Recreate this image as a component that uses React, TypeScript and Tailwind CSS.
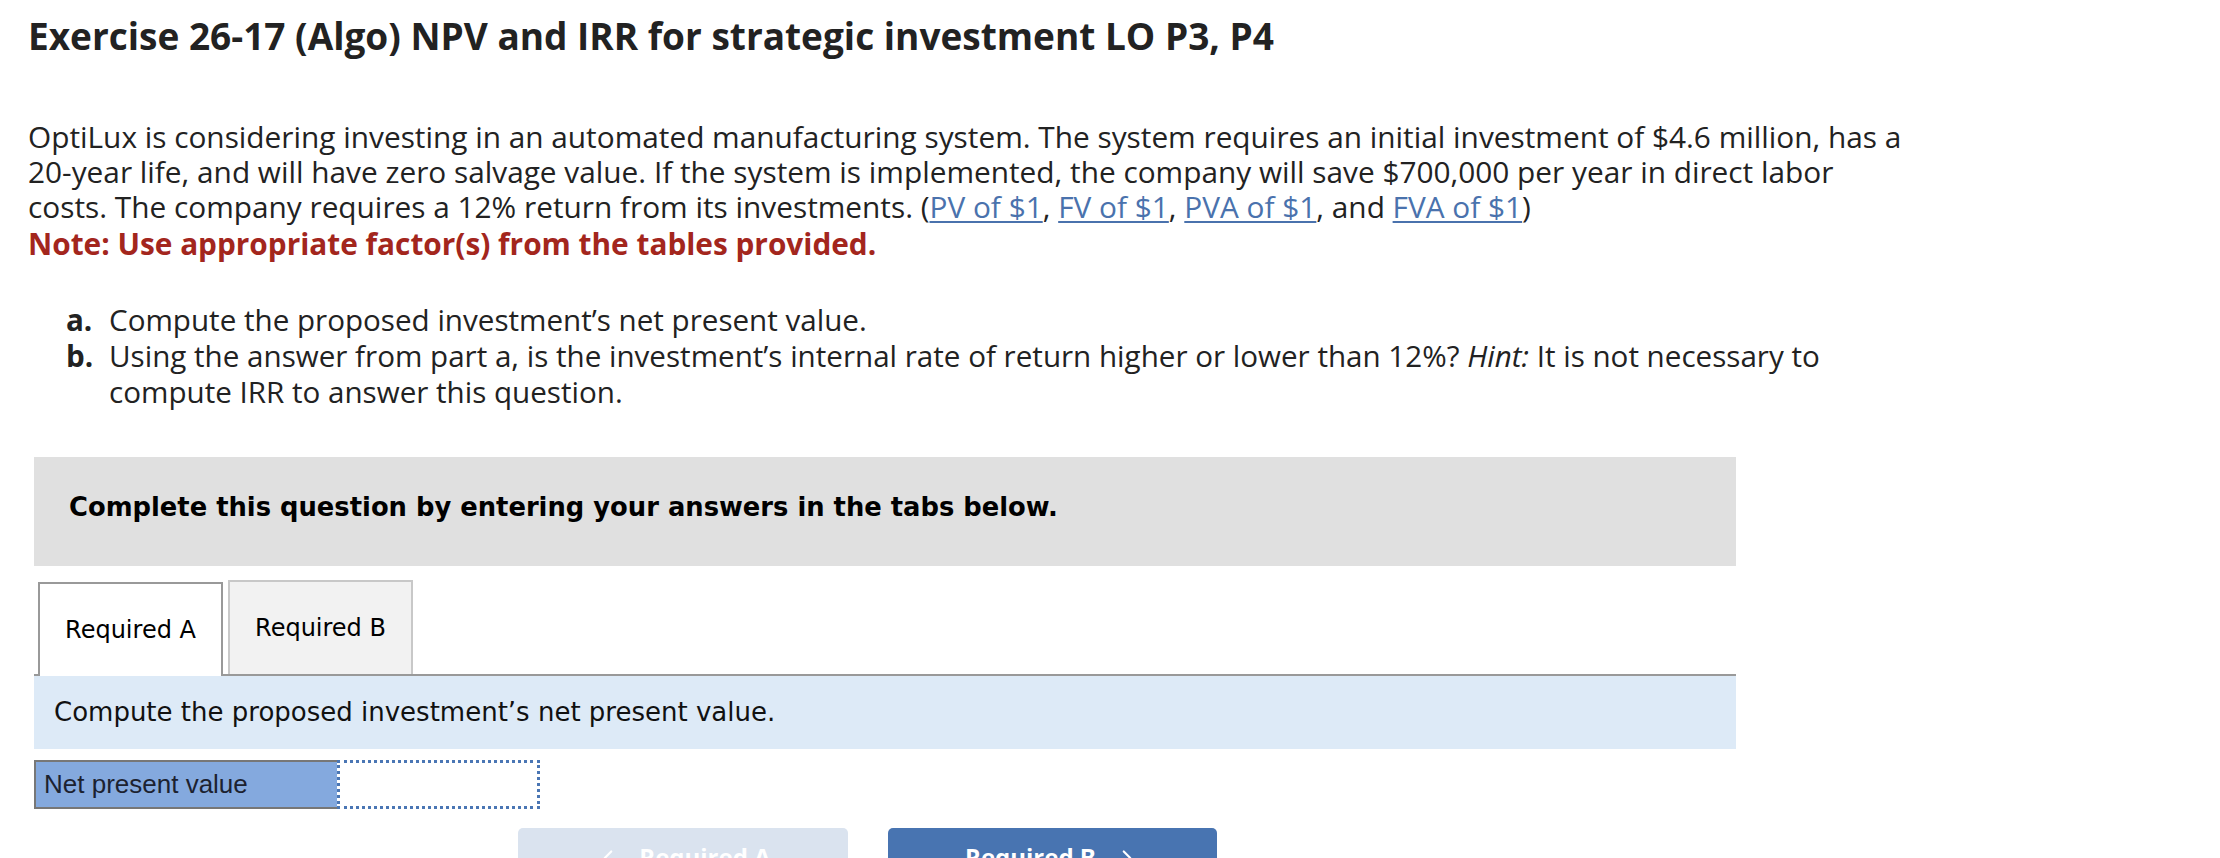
import { ChevronLeft, ChevronRight } from "lucide-react";

const proxima = { fontFamily: "'Open Sans', Lato, sans-serif" };

function Link({ children }: { children: React.ReactNode }) {
  return <a className="text-[#4a72ad] underline underline-offset-[3px] decoration-[1.5px]">{children}</a>;
}

export default function App() {
  return (
    <div className="min-h-[858px] w-[2220px] bg-white text-[#222] overflow-hidden">
      {/* heading + problem text */}
      <div className="pl-[28px] font-['Open_Sans',sans-serif]">
        <h1 className="pt-[14px] text-[37px] leading-[44px] font-bold text-[#222]">
          Exercise 26-17 (Algo) NPV and IRR for strategic investment LO P3, P4
        </h1>

        <div className="mt-[61px] text-[29.8px] leading-[35px]">
          <p>
            OptiLux is considering investing in an automated manufacturing system. The system requires an initial investment of $4.6 million, has a
            <br />
            20-year life, and will have zero salvage value. If the system is implemented, the company will save $700,000 per year in direct labor
            <br />
            costs. The company requires a 12% return from its investments. (<Link>PV of $1</Link>, <Link>FV of $1</Link>,{" "}
            <Link>PVA of $1</Link>, and <Link>FVA of $1</Link>)
          </p>
          <p className="mt-[2px] font-bold text-[#a3261d]">Note: Use appropriate factor(s) from the tables provided.</p>
        </div>

        <div className="mt-[41px] text-[29.6px] leading-[36px]">
          <div className="flex">
            <span className="w-[81px] pl-[38px] font-bold shrink-0">a.</span>
            <span>Compute the proposed investment’s net present value.</span>
          </div>
          <div className="flex">
            <span className="w-[81px] pl-[38px] font-bold shrink-0">b.</span>
            <span>
              Using the answer from part a, is the investment’s internal rate of return higher or lower than 12%? <i>Hint:</i> It is not necessary to
              <br />
              compute IRR to answer this question.
            </span>
          </div>
        </div>
      </div>

      {/* question area */}
      <div className="ml-[34px] mt-[47px] w-[1702px] font-['DejaVu_Sans',Verdana,sans-serif]">
        <div className="h-[109px] bg-[#e0e0e0] flex items-center pl-[35px] pb-[8px]">
          <span className="text-[25.8px] font-bold text-black">Complete this question by entering your answers in the tabs below.</span>
        </div>

        <div className="mt-[14px] flex items-end border-b-2 border-[#999] pl-[4px] gap-[5px]">
          <div className="h-[94px] w-[185px] -mb-[2px] border-2 border-b-0 border-[#999] bg-white flex items-center justify-center text-[24px] text-black">
            Required A
          </div>
          <div className="h-[94px] w-[185px] border-2 border-b-0 border-[#c8c8c8] bg-[#f2f2f2] flex items-center justify-center text-[24px] text-black">
            Required B
          </div>
        </div>

        <div className="h-[73px] bg-[#ddeaf7] flex items-center pl-[20px]">
          <span className="text-[26px] text-[#111]">Compute the proposed investment’s net present value.</span>
        </div>

        <div className="mt-[11px] flex h-[49px]">
          <div className="w-[303px] border-2 border-r-0 border-[#777] bg-[#84a9de] flex items-center pl-[8px] font-['Liberation_Sans',Arial,sans-serif] text-[26px] text-[#1c2230]">
            Net present value
          </div>
          <div className="w-[203px] border-[3px] border-dotted border-[#4a76b4] bg-white"></div>
        </div>

        <div className="mt-[19px] flex gap-[40px] pl-[484px]" style={proxima}>
          <button className="h-[64px] w-[330px] rounded-t-[5px] bg-[#dae3ef] text-white text-[24px] leading-[24px] font-bold flex items-start justify-center gap-[18px] pt-[17px]">
            <ChevronLeft className="h-[26px] w-[26px]" strokeWidth={2} />
            Required A
          </button>
          <button className="h-[64px] w-[329px] rounded-t-[5px] bg-[#4874b1] text-white text-[24px] leading-[24px] font-bold flex items-start justify-center gap-[18px] pt-[17px]">
            Required B
            <ChevronRight className="h-[26px] w-[26px]" strokeWidth={2} />
          </button>
        </div>
      </div>
    </div>
  );
}
